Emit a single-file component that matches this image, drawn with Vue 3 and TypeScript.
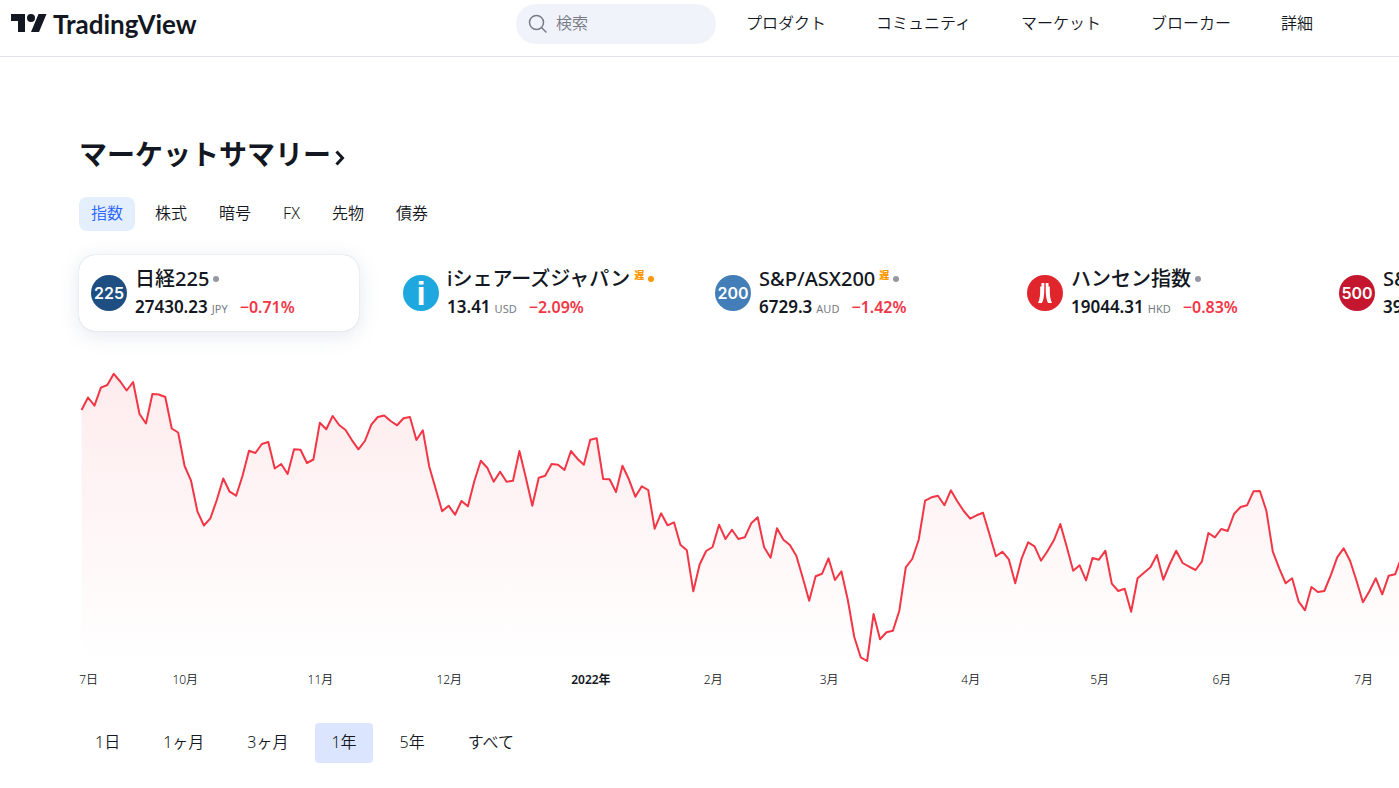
<script setup lang="ts">
import { computed, ref } from 'vue'

interface Quote {
  name: string
  badge: 'text' | 'ishares' | 'hangseng'
  label?: string
  color: string
  price: string
  currency: string
  change: string
  delayed?: boolean
  live?: boolean
}

const nav = ['プロダクト', 'コミュニティ', 'マーケット', 'ブローカー', '詳細']
const categories = ['指数', '株式', '暗号', 'FX', '先物', '債券']
const ranges = ['1日', '1ヶ月', '3ヶ月', '1年', '5年', 'すべて']

const category = ref('指数')
const range = ref('1年')
const selected = ref(0)

const quotes: Quote[] = [
  { name: '日経225', badge: 'text', label: '225', color: '#1f4f82', price: '27430.23', currency: 'JPY', change: '−0.71%' },
  { name: 'iシェアーズジャパン', badge: 'ishares', color: '#1ea8df', price: '13.41', currency: 'USD', change: '−2.09%', delayed: true, live: true },
  { name: 'S&P/ASX200', badge: 'text', label: '200', color: '#437eb8', price: '6729.3', currency: 'AUD', change: '−1.42%', delayed: true },
  { name: 'ハンセン指数', badge: 'hangseng', color: '#e0252c', price: '19044.31', currency: 'HKD', change: '−0.83%' },
  { name: 'S&P500', badge: 'text', label: '500', color: '#c4162f', price: '3946.00', currency: 'USD', change: '−1.13%' },
]

// Distance of every session's close from the top of the plot area.
const closes = [
  46, 33.5, 41.7, 23.7, 21, 9.8, 17.5, 26.5, 18, 50, 59.5, 30, 30.5, 33, 64.5, 68.5, 102, 116.7, 147.7, 161.5,
  154.3, 136, 114.5, 127.7, 131.7, 111.7, 86.8, 89, 80, 78, 104.5, 100, 110, 85.3, 85.7, 99, 95.5, 58.8, 65.3, 52,
  61, 66, 76.3, 85.3, 77, 60.7, 53, 51.5, 57, 61.3, 54.3, 53, 76, 66.3, 102.7, 125, 147.3, 141.7, 150.7, 137,
  142.3, 117, 96.7, 103.7, 117.7, 107.7, 117.7, 116.7, 87, 113.7, 141.7, 113.7, 111.7, 100, 100.7, 106, 87, 94.7, 100.7, 75.7,
  74.3, 115, 115.3, 128, 101.7, 115.3, 132.7, 122.3, 126, 164.7, 149.3, 161.3, 158.3, 180.7, 186.3, 227.3, 200.3, 187, 183, 160.7,
  175, 165.7, 175, 173.3, 159.3, 153.3, 183.3, 193.7, 164.3, 175.7, 181, 191.7, 213.7, 236.7, 212.3, 209.7, 194.3, 216, 207.3, 236,
  273, 293.3, 297, 250, 275.3, 268.3, 266.7, 246.7, 203.3, 195, 176, 136.7, 133.3, 131.7, 141.3, 126.3, 137.3, 147, 154.7, 151.3,
  148.7, 170.3, 192.3, 187.7, 195.3, 219.3, 194.3, 178.3, 182.3, 196.7, 187.3, 176.3, 160, 182.7, 206.7, 201.3, 216.3, 194, 195.7, 186.7,
  219.7, 227, 224.7, 247.7, 214.3, 208.7, 203.3, 191, 215.7, 200, 186.7, 199, 202.7, 206, 197.3, 169, 173.3, 165, 167, 149.7,
  143, 141.3, 127.3, 127, 146.7, 187.7, 204.3, 219.3, 214.3, 237.3, 246.3, 223, 228, 227, 211.3, 193.3, 184.3, 196.7, 216.7, 238.3,
  227.3, 214.3, 230.3, 211.7, 210.3, 193,
]

const months = [
  { text: '7日', at: 1 },
  { text: '10月', at: 16 },
  { text: '11月', at: 37 },
  { text: '12月', at: 57 },
  { text: '2022年', at: 79, major: true },
  { text: '2月', at: 98 },
  { text: '3月', at: 116 },
  { text: '4月', at: 138 },
  { text: '5月', at: 158 },
  { text: '6月', at: 177 },
  { text: '7月', at: 199 },
]

const line = computed(() => closes.map((y, i) => `${i + 0.4},${y}`).join(' '))
const area = computed(() => `0.4,300 ${line.value} ${closes.length - 0.6},300`)
</script>

<template>
  <div class="page">
    <header class="header">
      <a class="logo" href="#" aria-label="TradingView">
        <svg width="36" height="28" viewBox="0 0 36 28" aria-hidden="true">
          <path d="M14 22H7V11H0V4h14v18zM28 22h-8l7.5-18h8L28 22z" />
          <circle cx="20" cy="8" r="4" />
        </svg>
        <span>TradingView</span>
      </a>
      <label class="search">
        <svg width="20" height="20" viewBox="0 0 20 20" aria-hidden="true">
          <circle cx="8.5" cy="8.5" r="7" />
          <path d="M13.5 13.5l5 5" />
        </svg>
        <input type="search" placeholder="検索" aria-label="検索" />
      </label>
      <nav class="nav">
        <a v-for="item in nav" :key="item" href="#">{{ item }}</a>
      </nav>
    </header>

    <main class="summary">
      <h2 class="title">
        <a href="#">マーケットサマリー<svg width="10" height="16" viewBox="0 0 10 16" aria-hidden="true"><path d="M1.5 1.5L7.5 8l-6 6.5" /></svg></a>
      </h2>

      <div class="tabs">
        <button
          v-for="item in categories"
          :key="item"
          type="button"
          :class="{ active: item === category }"
          @click="category = item"
        >{{ item }}</button>
      </div>

      <div class="cards">
        <button
          v-for="(q, i) in quotes"
          :key="q.name"
          type="button"
          class="card"
          :class="{ active: i === selected }"
          @click="selected = i"
        >
          <svg class="badge" width="36" height="36" viewBox="0 0 36 36" aria-hidden="true">
            <circle cx="18" cy="18" r="18" :fill="q.color" />
            <text v-if="q.badge === 'text'" class="num" x="18" y="24" text-anchor="middle">{{ q.label }}</text>
            <text v-else-if="q.badge === 'ishares'" class="letter" x="18" y="30" text-anchor="middle">i</text>
            <path
              v-else
              fill="#fff"
              d="M14.500 8H17.300V14c0 6-.6 10.500-2.300 14H11c1.800-3.500 2.200-8 2.200-13V11.500h1.300zM21.500 8H18.700V14c0 6 .6 10.500 2.300 14h4c-1.800-3.500-2.200-8-2.200-13V11.500h-1.300z"
            />
          </svg>
          <span class="info">
            <span class="name">
              <span>{{ q.name }}</span>
              <span v-if="q.delayed" class="delay">遅</span>
              <i class="dot" :class="{ live: q.live }"></i>
            </span>
            <span class="values">
              <b class="price">{{ q.price }}</b>
              <small>{{ q.currency }}</small>
              <b class="down">{{ q.change }}</b>
            </span>
          </span>
        </button>
      </div>

      <div class="chart">
        <svg height="300" viewBox="0 0 205 300" preserveAspectRatio="none" role="img" aria-label="日経225">
          <defs>
            <linearGradient id="fade" gradientUnits="userSpaceOnUse" x1="0" y1="0" x2="0" y2="300">
              <stop offset="0" stop-color="#f23645" stop-opacity="0.1" />
              <stop offset="1" stop-color="#f23645" stop-opacity="0" />
            </linearGradient>
          </defs>
          <polygon :points="area" fill="url(#fade)" />
          <polyline :points="line" />
        </svg>
        <div class="axis">
          <span
            v-for="m in months"
            :key="m.at"
            :class="{ major: m.major }"
            :style="{ gridColumn: `${m.at} / span 3` }"
          >{{ m.text }}</span>
        </div>
      </div>

      <div class="ranges">
        <button
          v-for="item in ranges"
          :key="item"
          type="button"
          :class="{ active: item === range }"
          @click="range = item"
        >{{ item }}</button>
      </div>
    </main>
  </div>
</template>

<style>
body {
  margin: 0;
  background: #fff;
}
</style>

<style scoped>
.page {
  overflow: hidden;
  color: #131722;
  font: 350 16px/24px "Noto Sans", "Noto Sans CJK JP", sans-serif;
}

a {
  color: inherit;
  text-decoration: none;
}

button {
  border: 0;
  background: none;
  color: inherit;
  font: inherit;
  cursor: pointer;
  white-space: nowrap;
}

.header {
  display: grid;
  grid-template-columns: minmax(0, 516fr) 200px minmax(0, 683fr);
  align-items: center;
  height: 48px;
  padding-bottom: 8px;
  border-bottom: 1px solid #e0e3eb;
}

.logo {
  display: flex;
  align-items: center;
  gap: 6px;
  padding-left: 11px;
  font: 700 26px/28px Lato, sans-serif;
}

.logo svg {
  fill: #131722;
}

.search {
  display: flex;
  align-items: center;
  gap: 8px;
  box-sizing: border-box;
  height: 40px;
  padding: 0 12px;
  border-radius: 20px;
  background: #f0f3fa;
}

.search svg {
  flex: none;
  fill: none;
  stroke: #787b86;
  stroke-width: 1.5;
}

.search input {
  min-width: 0;
  flex: 1;
  padding: 0 0 2px;
  border: 0;
  outline: 0;
  background: none;
  color: inherit;
  font: inherit;
}

.search input::placeholder {
  color: #787b86;
  opacity: 1;
}

.nav {
  display: flex;
  gap: 50px;
  padding: 0 0 2px 30px;
  white-space: nowrap;
}

.summary {
  padding: 77px 0 24px 79px;
}

.title {
  margin: 0;
  font-size: 28px;
  line-height: 40px;
  font-weight: 700;
}

.title a {
  display: flex;
  align-items: center;
  gap: 4px;
}

.title svg {
  margin-top: 8px;
  fill: none;
  stroke: #131722;
  stroke-width: 3;
}

.tabs {
  display: flex;
  gap: 8px;
  margin-top: 23px;
}

.tabs button {
  height: 34px;
  padding: 0 12px 2px;
  border-radius: 8px;
}

.tabs .active {
  background: #e3effd;
  color: #2962ff;
}

.cards {
  display: flex;
  gap: 32px;
  margin-top: 24px;
}

.card {
  display: flex;
  flex: none;
  align-items: center;
  gap: 8px;
  box-sizing: border-box;
  width: 280px;
  height: 76px;
  padding: 0 12px;
  border-radius: 16px;
  text-align: left;
}

.card.active {
  box-shadow: 0 0 1px #b2b5be, 0 4px 20px rgba(106, 121, 157, 0.18);
}

.badge {
  flex: none;
}

.num {
  fill: #fff;
  font: 600 16px Inter, sans-serif;
}

.letter {
  fill: #fff;
  font: 700 33px "Liberation Sans", sans-serif;
}

.info,
.name,
.values {
  display: flex;
}

.info {
  flex-direction: column;
}

.name {
  align-items: center;
  gap: 4px;
  height: 28px;
  font-size: 20px;
  font-weight: 500;
}

.delay {
  align-self: flex-start;
  color: #ff9800;
  font-size: 10px;
  line-height: 20px;
  font-weight: 900;
}

.dot {
  width: 6px;
  height: 6px;
  border-radius: 50%;
  background: #9598a1;
}

.dot.live {
  background: #ff9800;
}

.values {
  align-items: baseline;
  gap: 4px;
  height: 28px;
  line-height: 28px;
}

.values b {
  font-weight: 600;
}

.values .price {
  font-size: 17px;
}

.values small {
  color: #787b86;
  font-size: 11px;
  font-weight: 400;
}

.values .down {
  margin-left: 8px;
  color: #f23645;
}

.chart {
  margin-top: 33px;
}

.chart svg {
  display: block;
  width: 100%;
}

.chart polyline {
  fill: none;
  stroke: #f23645;
  stroke-width: 2;
  stroke-linejoin: round;
  vector-effect: non-scaling-stroke;
}

.axis {
  display: grid;
  grid-template-columns: repeat(205, minmax(0, 1fr));
  margin-top: 4px;
  font-size: 12px;
}

.axis span {
  display: flex;
  justify-content: center;
  white-space: nowrap;
}

.axis .major {
  font-weight: 600;
}

.ranges {
  display: flex;
  gap: 11px;
  margin-top: 31px;
}

.ranges button {
  height: 40px;
  padding: 0 16px 2px;
  border-radius: 4px;
}

.ranges .active {
  background: #dbe6fe;
}
</style>
